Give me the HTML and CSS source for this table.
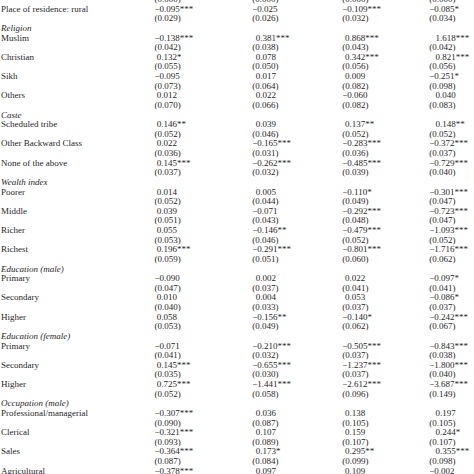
FILE: index.html
```html
<!DOCTYPE html>
<html>
<head>
<meta charset="utf-8">
<link rel="stylesheet" href="styles.css">
</head>
<body>
<div class="tbl">
<div class="r"><div></div><div>(0.000)</div><div>(0.000)</div><div>(0.000)</div><div>(0.000)</div></div>
<div class="r"><div>Place of residence: rural</div><div>−0.095***</div><div>−0.025</div><div>−0.109***</div><div>−0.085*</div></div>
<div class="r"><div></div><div>(0.029)</div><div>(0.026)</div><div>(0.032)</div><div>(0.034)</div></div>
<div class="r h"><div>Religion</div></div>
<div class="r"><div>Muslim</div><div>−0.138***</div><div class="p">0.381***</div><div class="p">0.868***</div><div class="p">1.618***</div></div>
<div class="r"><div></div><div>(0.042)</div><div>(0.038)</div><div>(0.043)</div><div>(0.042)</div></div>
<div class="r"><div>Christian</div><div class="p">0.132*</div><div class="p">0.078</div><div class="p">0.342***</div><div class="p">0.821***</div></div>
<div class="r"><div></div><div>(0.055)</div><div>(0.050)</div><div>(0.056)</div><div>(0.056)</div></div>
<div class="r"><div>Sikh</div><div>−0.095</div><div class="p">0.017</div><div class="p">0.009</div><div>−0.251*</div></div>
<div class="r"><div></div><div>(0.073)</div><div>(0.064)</div><div>(0.082)</div><div>(0.098)</div></div>
<div class="r"><div>Others</div><div class="p">0.012</div><div class="p">0.022</div><div>−0.060</div><div class="p">0.040</div></div>
<div class="r"><div></div><div>(0.070)</div><div>(0.066)</div><div>(0.082)</div><div>(0.083)</div></div>
<div class="r h"><div>Caste</div></div>
<div class="r"><div>Scheduled tribe</div><div class="p">0.146**</div><div class="p">0.039</div><div class="p">0.137**</div><div class="p">0.148**</div></div>
<div class="r"><div></div><div>(0.052)</div><div>(0.046)</div><div>(0.052)</div><div>(0.052)</div></div>
<div class="r"><div>Other Backward Class</div><div class="p">0.022</div><div>−0.165***</div><div>−0.283***</div><div>−0.372***</div></div>
<div class="r"><div></div><div>(0.036)</div><div>(0.031)</div><div>(0.036)</div><div>(0.037)</div></div>
<div class="r"><div>None of the above</div><div class="p">0.145***</div><div>−0.262***</div><div>−0.485***</div><div>−0.729***</div></div>
<div class="r"><div></div><div>(0.037)</div><div>(0.032)</div><div>(0.039)</div><div>(0.040)</div></div>
<div class="r h"><div>Wealth index</div></div>
<div class="r"><div>Poorer</div><div class="p">0.014</div><div class="p">0.005</div><div>−0.110*</div><div>−0.301***</div></div>
<div class="r"><div></div><div>(0.052)</div><div>(0.044)</div><div>(0.049)</div><div>(0.047)</div></div>
<div class="r"><div>Middle</div><div class="p">0.039</div><div>−0.071</div><div>−0.292***</div><div>−0.723***</div></div>
<div class="r"><div></div><div>(0.051)</div><div>(0.043)</div><div>(0.048)</div><div>(0.047)</div></div>
<div class="r"><div>Richer</div><div class="p">0.055</div><div>−0.146**</div><div>−0.479***</div><div>−1.093***</div></div>
<div class="r"><div></div><div>(0.053)</div><div>(0.046)</div><div>(0.052)</div><div>(0.052)</div></div>
<div class="r"><div>Richest</div><div class="p">0.196***</div><div>−0.291***</div><div>−0.801***</div><div>−1.716***</div></div>
<div class="r"><div></div><div>(0.059)</div><div>(0.051)</div><div>(0.060)</div><div>(0.062)</div></div>
<div class="r h"><div>Education (male)</div></div>
<div class="r"><div>Primary</div><div>−0.090</div><div class="p">0.002</div><div class="p">0.022</div><div>−0.097*</div></div>
<div class="r"><div></div><div>(0.047)</div><div>(0.037)</div><div>(0.041)</div><div>(0.041)</div></div>
<div class="r"><div>Secondary</div><div class="p">0.010</div><div class="p">0.004</div><div class="p">0.053</div><div>−0.086*</div></div>
<div class="r"><div></div><div>(0.040)</div><div>(0.033)</div><div>(0.037)</div><div>(0.037)</div></div>
<div class="r"><div>Higher</div><div class="p">0.058</div><div>−0.156**</div><div>−0.140*</div><div>−0.242***</div></div>
<div class="r"><div></div><div>(0.053)</div><div>(0.049)</div><div>(0.062)</div><div>(0.067)</div></div>
<div class="r h"><div>Education (female)</div></div>
<div class="r"><div>Primary</div><div>−0.071</div><div>−0.210***</div><div>−0.505***</div><div>−0.843***</div></div>
<div class="r"><div></div><div>(0.041)</div><div>(0.032)</div><div>(0.037)</div><div>(0.038)</div></div>
<div class="r"><div>Secondary</div><div class="p">0.145***</div><div>−0.655***</div><div>−1.237***</div><div>−1.800***</div></div>
<div class="r"><div></div><div>(0.035)</div><div>(0.030)</div><div>(0.037)</div><div>(0.040)</div></div>
<div class="r"><div>Higher</div><div class="p">0.725***</div><div>−1.441***</div><div>−2.612***</div><div>−3.687***</div></div>
<div class="r"><div></div><div>(0.052)</div><div>(0.058)</div><div>(0.096)</div><div>(0.149)</div></div>
<div class="r h"><div>Occupation (male)</div></div>
<div class="r"><div>Professional/managerial</div><div>−0.307***</div><div class="p">0.036</div><div class="p">0.138</div><div class="p">0.197</div></div>
<div class="r"><div></div><div>(0.090)</div><div>(0.087)</div><div>(0.105)</div><div>(0.105)</div></div>
<div class="r"><div>Clerical</div><div>−0.321***</div><div class="p">0.107</div><div class="p">0.159</div><div class="p">0.244*</div></div>
<div class="r"><div></div><div>(0.093)</div><div>(0.089)</div><div>(0.107)</div><div>(0.107)</div></div>
<div class="r"><div>Sales</div><div>−0.364***</div><div class="p">0.173*</div><div class="p">0.295**</div><div class="p">0.355***</div></div>
<div class="r"><div></div><div>(0.087)</div><div>(0.084)</div><div>(0.099)</div><div>(0.098)</div></div>
<div class="r"><div>Agricultural</div><div>−0.378***</div><div class="p">0.097</div><div class="p">0.109</div><div>−0.002</div></div>
<div class="r"><div></div><div>(0.081)</div><div>(0.079)</div><div>(0.094)</div><div>(0.093)</div></div>
</div>
</body>
</html>
```
FILE: styles.css
```css
html, body {
  margin: 0;
  padding: 0;
  background: #ffffff;
  width: 474px;
  height: 474px;
  overflow: hidden;
}

body {
  font-family: "Liberation Serif", "Times New Roman", serif;
  font-size: 9px;
  color: #1f1f1f;
}

.tbl {
  margin-top: -5px;
  padding-left: 1px;
}

.r {
  display: grid;
  grid-template-columns: 153.5px 97.8px 90px 87px 1fr;
  height: 9.625px;
  line-height: 9.625px;
  white-space: nowrap;
}

.h > div {
  font-style: italic;
}

.r > .p:nth-child(2) { padding-left: 2.3px; }
.r > .p:nth-child(3) { padding-left: 3.4px; }
.r > .p:nth-child(4) { padding-left: 2.7px; }
.r > .p:nth-child(5) { padding-left: 6.3px; }
```
